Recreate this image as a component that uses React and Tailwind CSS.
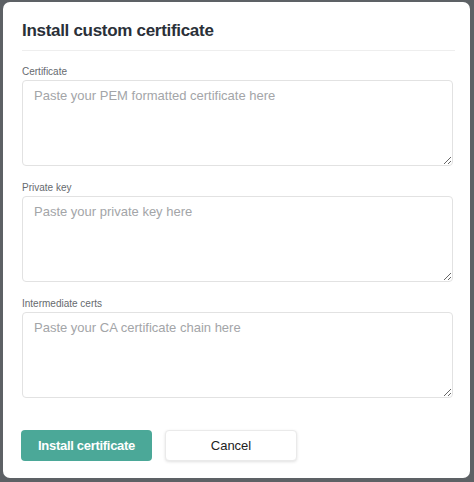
export default function App() {
  const fields = [
    { label: "Certificate", placeholder: "Paste your PEM formatted certificate here" },
    { label: "Private key", placeholder: "Paste your private key here" },
    { label: "Intermediate certs", placeholder: "Paste your CA certificate chain here" },
  ];
  return (
    <div
      className="w-[474px] h-[482px] bg-[#5d6165] pt-[2px] pl-[3px] pr-[4px] pb-[4px]"
      style={{ fontFamily: '"Liberation Sans", Arial, sans-serif' }}
    >
      <div className="h-full bg-white rounded-[7px] pl-[19px] pr-[17px] pt-[15px] flex flex-col">
        <h1 className="text-[17px] leading-[28px] font-bold text-[#2a3038] tracking-[-0.3px]">
          Install custom certificate
        </h1>
        <div className="mt-[5px] border-t border-[#eeeeee] mr-[-2px]" />
        <div className="mt-[13px] flex flex-col gap-[14px]">
          {fields.map((f) => (
            <div key={f.label} className="flex flex-col">
              <label className="text-[10px] leading-[16px] text-[#666a6e]">{f.label}</label>
              <textarea
                placeholder={f.placeholder}
                className="h-[86px] w-full border border-[#e2e2e2] rounded-[4px] px-[11px] py-[6px] text-[13px] leading-[18px] text-[#333] placeholder:text-[#a3a5a8] outline-none"
              />
            </div>
          ))}
        </div>
        <div className="mt-[32px] flex gap-[13px] ml-[-1px]">
          <button className="w-[131px] h-[31px] rounded-[4px] bg-[#4ba898] text-white text-[13px] font-bold tracking-[-0.3px]">
            Install certificate
          </button>
          <button className="w-[132px] h-[31px] rounded-[4px] bg-white border border-[#eaeaea] shadow-[0_1px_3px_rgba(0,0,0,0.12)] text-[#222] text-[13px]">
            Cancel
          </button>
        </div>
      </div>
    </div>
  );
}
